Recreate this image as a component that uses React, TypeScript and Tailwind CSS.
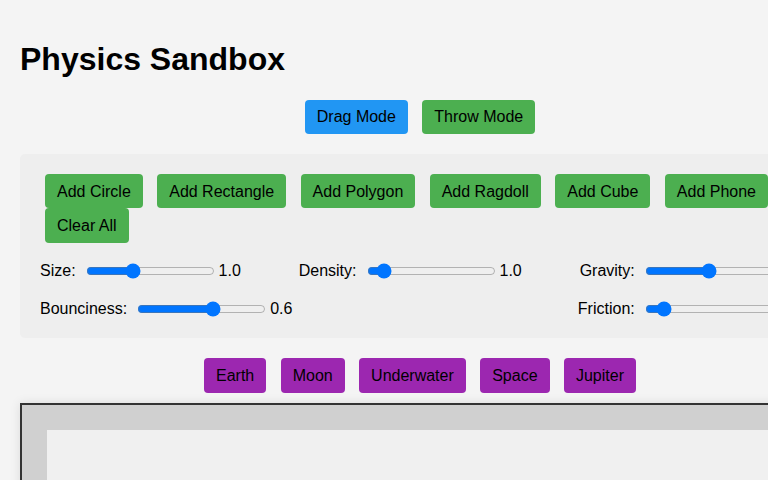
import { useState } from "react";

const shapeButtons = ["Add Circle", "Add Rectangle", "Add Polygon", "Add Ragdoll", "Add Cube", "Add Phone", "Clear All"];
const presets = ["Earth", "Moon", "Underwater", "Space", "Jupiter"];

type SliderProps = {
  label: string;
  min: number;
  max: number;
  step: number;
  value: number;
  onChange: (v: number) => void;
};

const Slider = ({ label, min, max, step, value, onChange }: SliderProps) => (
  <div className="flex items-center">
    <label className="mr-[10px]">{label}</label>
    <input
      type="range"
      min={min}
      max={max}
      step={step}
      value={value}
      onChange={(e) => onChange(parseFloat(e.target.value))}
      className="w-[129px]"
    />
    <span className="ml-1">{value.toFixed(1)}</span>
  </div>
);

const App = () => {
  const [size, setSize] = useState(1.0);
  const [density, setDensity] = useState(1.0);
  const [gravity, setGravity] = useState(1.0);
  const [bounce, setBounce] = useState(0.6);
  const [friction, setFriction] = useState(0.1);
  const [mode, setMode] = useState("drag");

  return (
    <div className="h-screen w-screen overflow-hidden bg-[#f4f4f4] text-base leading-[1.15] text-black font-['Liberation_Sans',Arial,sans-serif]">
      <div className="w-[840px] p-5">
        <div className="w-[800px]">
          <h1 className="my-[21.44px] text-[32px] font-bold leading-[1.15]">Physics Sandbox</h1>

          {/* Mode toggle */}
          <div className="flex justify-center gap-[14.4px]">
            <button
              onClick={() => setMode("drag")}
              className={`rounded-[4px] px-3 pt-[8.5px] pb-[7.5px] leading-[1.15] ${mode === "drag" ? "bg-[#2196f3]" : "bg-[#4caf50]"}`}
            >
              Drag Mode
            </button>
            <button
              onClick={() => setMode("throw")}
              className={`rounded-[4px] px-3 pt-[8.5px] pb-[7.5px] leading-[1.15] ${mode === "throw" ? "bg-[#2196f3]" : "bg-[#4caf50]"}`}
            >
              Throw Mode
            </button>
          </div>

          {/* Controls */}
          <div className="mt-5 rounded-[5px] bg-[#eeeeee] p-5">
            <div className="flex flex-wrap gap-x-[14.4px] pl-[5px]">
              {shapeButtons.map((b) => (
                <button key={b} className="rounded-[4px] bg-[#4caf50] px-3 pt-[8.5px] pb-[7.5px] leading-[1.15]">
                  {b}
                </button>
              ))}
            </div>
            <div className="mt-[19px] flex h-[18.4px] items-center justify-between">
              <Slider label="Size:" min={0.2} max={2.5} step={0.1} value={size} onChange={setSize} />
              <Slider label="Density:" min={0.2} max={10} step={0.1} value={density} onChange={setDensity} />
              <Slider label="Gravity:" min={0} max={2} step={0.1} value={gravity} onChange={setGravity} />
            </div>
            <div className="mt-[19.5px] flex h-[18.4px] items-center justify-between">
              <Slider label="Bounciness:" min={0} max={1} step={0.1} value={bounce} onChange={setBounce} />
              <Slider label="Friction:" min={0} max={1} step={0.1} value={friction} onChange={setFriction} />
            </div>
          </div>

          {/* Environment presets */}
          <div className="mt-5 flex justify-center gap-[14.4px]">
            {presets.map((p) => (
              <button key={p} className="rounded-[4px] bg-[#9c27b0] px-3 pt-[8.5px] pb-[7.5px] leading-[1.15]">
                {p}
              </button>
            ))}
          </div>

          {/* Canvas */}
          <div className="mt-[10px] h-[600px] border-2 border-[#333] bg-[#d0d0d0] p-[25px] shadow-[0_0_10px_rgba(0,0,0,0.1)]">
            <div className="h-full bg-[#f0f0f0]" />
          </div>
        </div>
      </div>
    </div>
  );
};

export default App;
